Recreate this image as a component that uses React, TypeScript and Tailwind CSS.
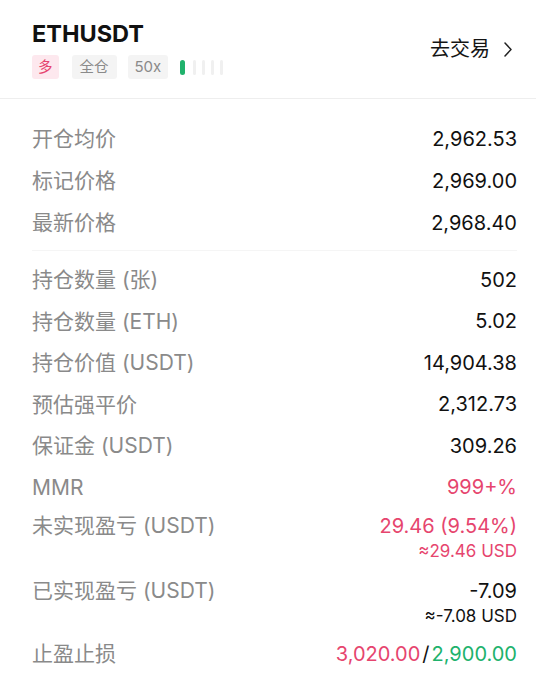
import React from 'react';

const FONT = "font-['Inter','Noto_Sans_CJK_SC',sans-serif]";

type Row = { label: string; value: string; tone?: 'pink' };

const priceRows: Row[] = [
  { label: '开仓均价', value: '2,962.53' },
  { label: '标记价格', value: '2,969.00' },
  { label: '最新价格', value: '2,968.40' },
];

const positionRows: Row[] = [
  { label: '持仓数量 (张)', value: '502' },
  { label: '持仓数量 (ETH)', value: '5.02' },
  { label: '持仓价值 (USDT)', value: '14,904.38' },
  { label: '预估强平价', value: '2,312.73' },
  { label: '保证金 (USDT)', value: '309.26' },
  { label: 'MMR', value: '999+%', tone: 'pink' },
];

function InfoRow({ row, height }: { row: Row; height: string }) {
  return (
    <div className={`flex items-center justify-between ${height}`}>
      <span className="text-[21px] text-[#8a8a8a]">{row.label}</span>
      <span className={`text-[20px] ${row.tone === 'pink' ? 'text-[#e6456e]' : 'text-[#111111]'}`}>
        {row.value}
      </span>
    </div>
  );
}

export default function App() {
  return (
    <div className={`w-[536px] h-[689px] bg-white ${FONT}`}>
      {/* header */}
      <div className="flex items-center justify-between pl-[32px] pr-[24px] pt-[19px] pb-[19px] border-b border-[#eeeeee]">
        <div>
          <div className="text-[23.5px] leading-[30px] font-bold text-[#111111]">ETHUSDT</div>
          <div className="flex items-center mt-[6px]">
            <span className="h-[24px] px-[6px] flex items-center rounded-[3px] bg-[#fde8ee] text-[#e6456e] text-[14.5px]">多</span>
            <span className="h-[24px] px-[8px] ml-[13px] flex items-center rounded-[3px] bg-[#f4f4f4] text-[#8a8a8a] text-[14.5px]">全仓</span>
            <span className="h-[24px] px-[7px] ml-[11px] flex items-center rounded-[3px] bg-[#f4f4f4] text-[#8a8a8a] text-[15px]">50x</span>
            <div className="flex items-center gap-[6px] ml-[12px]">
              <span className="w-[5px] h-[15px] rounded-full bg-[#20b26c]" />
              <span className="w-[3px] h-[15px] rounded-full bg-[#f0f0f0] ml-[2px]" />
              <span className="w-[3px] h-[15px] rounded-full bg-[#f0f0f0]" />
              <span className="w-[3px] h-[15px] rounded-full bg-[#f0f0f0]" />
              <span className="w-[3px] h-[15px] rounded-full bg-[#f0f0f0]" />
            </div>
          </div>
        </div>
        <div className="flex items-center gap-[14px] text-[20px] text-[#141414]">
          <span>去交易</span>
          <svg width="8" height="15" viewBox="0 0 8 15" fill="none">
            <path d="M1 1L7 7.5L1 14" stroke="#222" strokeWidth="1.5" strokeLinecap="round" strokeLinejoin="round" />
          </svg>
        </div>
      </div>

      <div className="pl-[32px] pr-[19px] pt-[19px]">
        {priceRows.map((r) => (
          <InfoRow key={r.label} row={r} height="h-[42px]" />
        ))}
        <div className="h-px bg-[#f5f5f5] mt-[6px] mb-[8px]" />
        {positionRows.map((r) => (
          <InfoRow key={r.label} row={r} height="h-[41.5px]" />
        ))}

        <div className="flex justify-between h-[65px] pt-[4px]">
          <span className="text-[21px] leading-[28px] text-[#8a8a8a]">未实现盈亏 (USDT)</span>
          <div className="flex flex-col items-end">
            <span className="text-[20px] leading-[28px] text-[#e6456e]">29.46 (9.54%)</span>
            <span className="text-[17px] leading-[22px] text-[#e6456e]">≈29.46 USD</span>
          </div>
        </div>

        <div className="flex justify-between h-[60px] pt-[4px]">
          <span className="text-[21px] leading-[28px] text-[#8a8a8a]">已实现盈亏 (USDT)</span>
          <div className="flex flex-col items-end">
            <span className="text-[20px] leading-[28px] text-[#111111]">-7.09</span>
            <span className="text-[17px] leading-[22px] text-[#111111]">≈-7.08 USD</span>
          </div>
        </div>

        <div className="flex items-center justify-between h-[42px]">
          <span className="text-[21px] text-[#8a8a8a]">止盈止损</span>
          <span className="text-[20px]">
            <span className="text-[#e6456e]">3,020.00</span>
            <span className="text-[#111111] mx-[2px]">/</span>
            <span className="text-[#20b26c]">2,900.00</span>
          </span>
        </div>
      </div>
    </div>
  );
}
